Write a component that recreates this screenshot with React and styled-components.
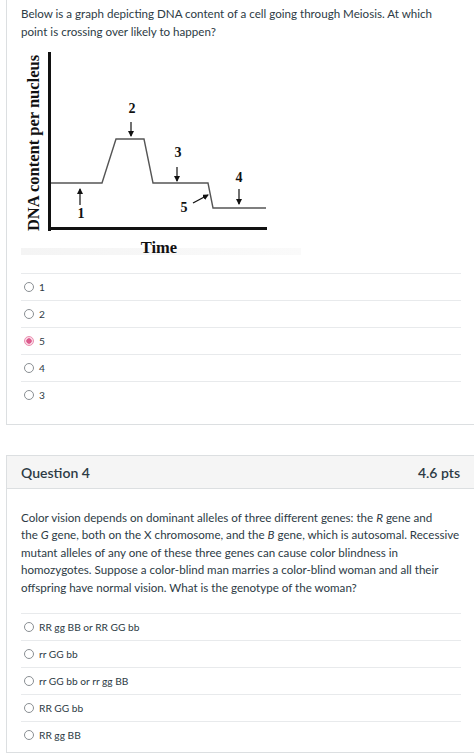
import React from 'react'
import styled, { createGlobalStyle } from 'styled-components'

const GlobalStyle = createGlobalStyle`
  body {
    margin: 0;
    background: #ffffff;
    font-family: Lato, "Open Sans", sans-serif;
    color: #2d3b45;
  }
`

const q4Answers = ['RR gg BB or RR GG bb', 'rr GG bb', 'rr GG bb or rr gg BB', 'RR GG bb', 'RR gg BB']
const q3Answers = [
  { label: '1' },
  { label: '2' },
  { label: '5', checked: true },
  { label: '4' },
  { label: '3' },
]

const Arrow = ({ x1, y1, x2, y2 }) => (
  <line x1={x1} y1={y1} x2={x2} y2={y2} stroke="#111" strokeWidth="1.2" markerEnd="url(#head)" />
)

const Label = ({ x, y, children }) => (
  <text x={x} y={y} textAnchor="middle" dominantBaseline="central" fontSize="14" fontWeight="bold"
    fontFamily='"Liberation Serif", "DejaVu Serif", serif' fill="#111">{children}</text>
)

const MeiosisGraph = () => (
  <svg width="280" height="210" viewBox="0 0 280 210">
    <defs>
      <marker id="head" markerWidth="6" markerHeight="6" refX="5" refY="3" orient="auto" markerUnits="userSpaceOnUse">
        <path d="M0,0 L6,3 L0,6 Z" fill="#111" />
      </marker>
      <linearGradient id="strip" x1="0" x2="1" y1="0" y2="0">
        <stop offset="0" stopColor="#f4f4f4" />
        <stop offset="1" stopColor="#fafafa" />
      </linearGradient>
    </defs>
    <rect x="0" y="203" width="280" height="7" fill="url(#strip)" />
    <text x="12" y="98" transform="rotate(-90 12 98)" textAnchor="middle" dominantBaseline="central"
      fontSize="16.5" fontWeight="bold" fontFamily='"Liberation Serif", "DejaVu Serif", serif' fill="#111">
      DNA content per nucleus
    </text>
    <rect x="27" y="7" width="3" height="179" fill="#111" />
    <rect x="27" y="182" width="219" height="3" fill="#111" />
    <polyline points="30,138 81,138 95,94 123,94 132,138 187,138 192,163 245,163"
      fill="none" stroke="#555" strokeWidth="1.4" />
    <Label x={111} y={63}>2</Label>
    <Arrow x1={110} y1={77} x2={110} y2={91} />
    <Label x={157} y={107}>3</Label>
    <Arrow x1={156} y1={122} x2={156} y2={136} />
    <Label x={218} y={132}>4</Label>
    <Arrow x1={218} y1={144} x2={218} y2={159} />
    <Label x={60} y={168}>1</Label>
    <Arrow x1={59} y1={160} x2={59} y2={144} />
    <Label x={163} y={162}>5</Label>
    <Arrow x1={172} y1={158} x2={187} y2={150} />
    <text x="138" y="202" textAnchor="middle" dominantBaseline="central" fontSize="16.5" fontWeight="bold"
      fontFamily='"Liberation Serif", "DejaVu Serif", serif' fill="#111">Time</text>
  </svg>
)

const App = () => {
  return (
    <Page>
      <GlobalStyle />
      <Card>
        <CardBody $top="5px" $bottom="16px">
          <QuestionText>
            Below is a graph depicting DNA content of a cell going through Meiosis. At which point is crossing over likely to happen?
          </QuestionText>
          <Figure>
            <MeiosisGraph />
          </Figure>
          <AnswerList $gap="18px">
            {q3Answers.map((a) => (
              <Answer key={a.label}>
                <Radio $checked={a.checked} />
                <AnswerText>{a.label}</AnswerText>
              </Answer>
            ))}
          </AnswerList>
        </CardBody>
      </Card>
      <Card $withTop>
        <Header>
          <HeaderTitle>Question 4</HeaderTitle>
          <HeaderTitle>4.6 pts</HeaderTitle>
        </Header>
        <CardBody $top="20px" $bottom="4px">
          <Paragraph>
            Color vision depends on dominant alleles of three different genes: the <i>R</i> gene and the{'\u00a0'}<i>G</i> gene, both on the X chromosome, and the <i>B</i> gene, which is autosomal. Recessive mutant alleles of any one of these three genes can cause color blindness in homozygotes. Suppose a color-blind man marries a color-blind woman and all their offspring have normal vision. What is the genotype of the woman?
          </Paragraph>
          <AnswerList $gap="17px">
            {q4Answers.map((a) => (
              <Answer key={a}>
                <Radio />
                <AnswerText>{a}</AnswerText>
              </Answer>
            ))}
          </AnswerList>
        </CardBody>
      </Card>
    </Page>
  )
}

const Page = styled.div`
  padding-left: 6px;
  display: flex;
  flex-direction: column;
  gap: 30px;
`
const Card = styled.div`
  border-left: 1px solid #dcdfe1;
  border-bottom: 1px solid #dcdfe1;
  border-top: ${(p) => (p.$withTop ? '1px solid #dcdfe1' : 'none')};
  margin-right: -14px;
`
const Header = styled.div`
  height: 32px;
  background: #f5f5f5;
  border-bottom: 1px solid #dcdfe1;
  display: flex;
  align-items: center;
  justify-content: space-between;
  padding: 0 28px 0 14px;
`
const HeaderTitle = styled.span`
  font-size: 14px;
  font-weight: 600;
  color: #2d3b45;
`
const CardBody = styled.div`
  padding: ${(p) => p.$top} 27px ${(p) => p.$bottom} 14px;
`
const QuestionText = styled.p`
  margin: 0;
  font-size: 11.6px;
  line-height: 18px;
`
const Paragraph = styled.p`
  margin: 0;
  font-size: 11.6px;
  line-height: 17.4px;
`
const Figure = styled.div`
  margin-top: 4px;
  display: flex;
`
const AnswerList = styled.div`
  margin-top: ${(p) => p.$gap};
  display: flex;
  flex-direction: column;
`
const Answer = styled.div`
  height: 26px;
  border-top: 1px solid #e8eaec;
  display: flex;
  align-items: center;
  padding-left: 3px;
  gap: 5px;
`
const Radio = styled.span`
  width: 10px;
  height: 10px;
  box-sizing: border-box;
  border-radius: 50%;
  border: 1px solid ${(p) => (p.$checked ? '#ec8db0' : '#8a8f93')};
  background: ${(p) => (p.$checked ? 'radial-gradient(circle, #dc5a8c 0 2.4px, #f9dbe6 3px)' : '#fff')};
`
const AnswerText = styled.span`
  font-size: 10.2px;
  color: #2d3b45;
`

export default App
